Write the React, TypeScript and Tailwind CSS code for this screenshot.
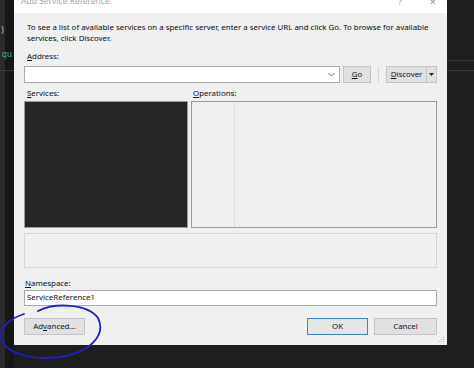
import React from "react";

const U = ({ children }: { children: React.ReactNode }) => (
  <span className="underline underline-offset-[1px] decoration-[0.5px]">{children}</span>
);

export default function App() {
  return (
    <div
      className="w-[474px] h-[368px] bg-[#1e1e1e] relative overflow-hidden flex text-[#111]"
      style={{ fontFamily: '"Noto Sans", "Open Sans", sans-serif' }}
    >
      {/* left editor strip */}
      <div className="w-[14px] h-full flex">
        <div className="w-[5px] h-full bg-[#2b2b2b] relative">
          <span className="absolute left-[1px] top-[25px] text-[9px] text-[#bbb] leading-none">)</span>
        </div>
        <div className="flex-1 h-full bg-[#161616] relative">
          <span className="absolute left-[-3px] top-[50px] text-[8px] text-[#3fb2a4] leading-none">qu</span>
          <div className="absolute left-[-5px] right-0 top-[70px] h-px bg-[#3a3a3a]" />
        </div>
      </div>

      {/* dialog */}
      <div className="w-[433px] h-[345px] flex flex-col bg-[#f0f0f0]">
        <div className="h-[13px] bg-white relative overflow-hidden flex">
          <span className="absolute left-[7px] top-[-5px] text-[8.5px] leading-[11px] text-[#a8a8a8]">
            Add Service Reference
          </span>
          <span className="absolute left-[384px] top-[-4px] text-[9px] leading-[11px] text-[#9a9a9a]">?</span>
          <span className="absolute left-[415px] top-[-4px] text-[9px] leading-[11px] text-[#9a9a9a]">✕</span>
        </div>
        <div className="flex-1 px-[10px] pt-[9px] flex flex-col text-[7.9px] relative">
          <p className="leading-[11px] pl-[3px] pr-[2px] text-[#0a0a0a]">
            To see a list of available services on a specific server, enter a service URL and click Go. To browse for available
            services, click Discover.
          </p>
          <div className="mt-[7px] leading-[11px] pl-[3px]">
            <U>A</U>ddress:
          </div>
          <div className="mt-[4px] h-[17px] flex items-stretch">
            <div className="w-[316px] bg-white border border-[#a9a9a9] flex items-center justify-end pr-[4px]">
              <svg width="7" height="5" viewBox="0 0 7 5">
                <path d="M0.5 1 L3.5 4 L6.5 1" fill="none" stroke="#666" strokeWidth="0.9" />
              </svg>
            </div>
            <div className="ml-[3px] w-[28px] bg-[#e1e1e1] border border-[#c4c4c4] flex items-center justify-center leading-none">
              <span>
                <U>G</U>o
              </span>
            </div>
            <div className="ml-[7px] w-px my-[1px] bg-[#d2d2d2]" />
            <div className="ml-[7px] w-[51px] bg-[#e1e1e1] border border-[#c4c4c4] flex leading-none">
              <div className="flex-1 flex items-center justify-center">
                <span>
                  <U>D</U>iscover
                </span>
              </div>
              <div className="w-px bg-[#c4c4c4]" />
              <div className="w-[9px] flex items-center justify-center">
                <svg width="5" height="3" viewBox="0 0 5 3">
                  <path d="M0 0 L5 0 L2.5 3 Z" fill="#222" />
                </svg>
              </div>
            </div>
          </div>
          <div className="mt-[5px] leading-[11px] flex">
            <div className="w-[167px] pl-[3px]">
              <U>S</U>ervices:
            </div>
            <div className="pl-[2px]">
              <U>O</U>perations:
            </div>
          </div>
          <div className="mt-[2px] h-[127px] flex">
            <div className="w-[164px] bg-[#252526] border border-[#9a9a9a]" />
            <div className="ml-[3px] flex-1 border border-[#9a9a9a] bg-[#f0f0f0] flex">
              <div className="w-[43px] border-r border-[#dcdcdc]" />
              <div className="flex-1" />
            </div>
          </div>
          <div className="mt-[5px] h-[35px] border border-[#d4d4d4] bg-[#f0f0f0]" />
          <div className="mt-[10px] leading-[11px] pl-[1px]">
            <U>N</U>amespace:
          </div>
          <div className="mt-[1px] h-[16px] bg-white border border-[#a9a9a9] flex items-center pl-[2px] leading-none">
            ServiceReference1
          </div>
          <div className="mt-[12px] h-[17px] flex leading-none">
            <div className="w-[61px] bg-[#e1e1e1] border border-[#c4c4c4] flex items-center justify-center">
              <span>
                Ad<U>v</U>anced...
              </span>
            </div>
            <div className="flex-1" />
            <div className="w-[61px] bg-[#e5e5e5] border-[1.5px] border-[#3b83d6] flex items-center justify-center">
              OK
            </div>
            <div className="ml-[6px] w-[63px] bg-[#e1e1e1] border border-[#c4c4c4] flex items-center justify-center">
              Cancel
            </div>
          </div>
          {/* resize grip */}
          <svg className="absolute right-[2px] bottom-[2px]" width="6" height="6" viewBox="0 0 6 6">
            <rect x="4" y="0" width="1" height="1" fill="#b0b0b0" />
            <rect x="2" y="2" width="1" height="1" fill="#b0b0b0" />
            <rect x="4" y="2" width="1" height="1" fill="#b0b0b0" />
            <rect x="0" y="4" width="1" height="1" fill="#b0b0b0" />
            <rect x="2" y="4" width="1" height="1" fill="#b0b0b0" />
            <rect x="4" y="4" width="1" height="1" fill="#b0b0b0" />
          </svg>
        </div>
      </div>

      {/* right editor strip */}
      <div className="flex-1 h-full bg-[#1e1e1e] relative">
        <div className="absolute left-0 right-0 top-[60px] h-px bg-[#3c3c3c]" />
        <div className="absolute left-0 right-0 top-[70px] h-px bg-[#3c3c3c]" />
      </div>

      {/* hand-drawn blue loop */}
      <svg className="absolute left-0 top-0 pointer-events-none" width="474" height="368" viewBox="0 0 474 368">
        <path
          d="M38 311 C 55 302, 88 304, 98 318 C 106 334, 92 352, 60 357 C 30 361, 4 352, 1 338 C -1 326, 12 318, 24 314"
          fill="none"
          stroke="#1f1fc8"
          strokeWidth="1.8"
          strokeLinecap="round"
        />
      </svg>
    </div>
  );
}
